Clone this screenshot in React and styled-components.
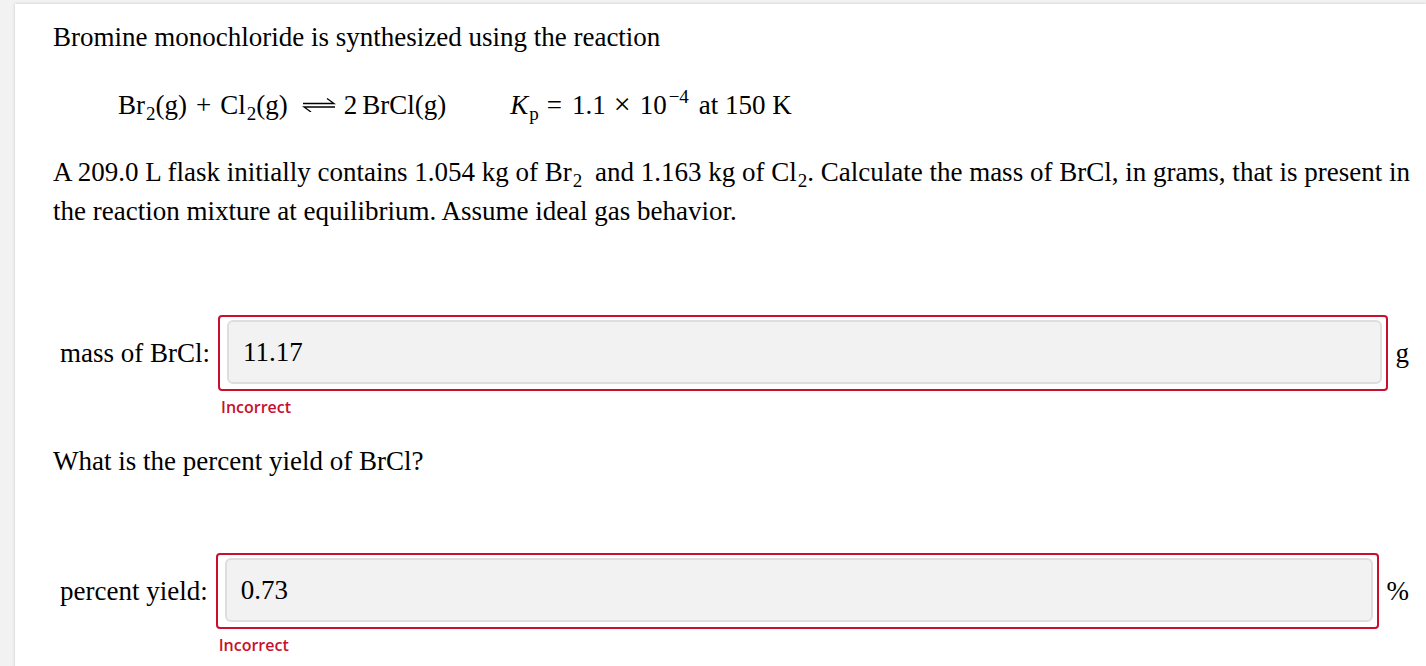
import React from 'react';
import styled, {createGlobalStyle} from 'styled-components';

const GlobalStyle = createGlobalStyle`
  body {
    margin: 0;
    background: #f2f2f2;
    font-family: "Liberation Serif", "Times New Roman", serif;
    color: #000;
  }
`;

const Page = styled.div`
  padding: 4px 0 0 15px;
  height: 662px;
  overflow: hidden;
`;

const Card = styled.div`
  background: #fff;
  box-shadow: 0 0 3px rgba(0, 0, 0, 0.18);
  padding: 14px 8px 40px 38px;
  min-height: 700px;
  font-size: 27px;
  line-height: 39px;
`;

const Para = styled.p`
  margin: ${p => p.$mt || 0}px 0 0 0;
`;

const Equation = styled.div`
  margin: 27px 0 0 65px;
  white-space: nowrap;
`;

const Sub = styled.sub`
  font-size: 19px;
  vertical-align: -6px;
  line-height: 0;
  margin: 0 ${p => p.$mr || 0}px 0 1px;
`;

const Sup = styled.sup`
  font-size: 19px;
  vertical-align: 11px;
  line-height: 0;
  margin-left: 2px;
`;

const Space = styled.span`
  display: inline-block;
  width: ${p => p.$w}px;
`;

const Italic = styled.i``;

const Times = styled.span`
  font-size: 30px;
`;

const ArrowSvg = styled.svg`
  vertical-align: 2px;
  margin: 0 8px 0 14px;
`;

const Arrow = () => (
  <ArrowSvg width="34" height="14" viewBox="0 0 34 14">
    <path d="M1 5.5 H32 L25 0.5" fill="none" stroke="#000" strokeWidth="1.3"/>
    <path d="M33 9 H2 L9 14" fill="none" stroke="#000" strokeWidth="1.3"/>
  </ArrowSvg>
);

const Field = styled.div`
  margin: ${p => p.$mt}px 0 0 7px;
  display: grid;
  grid-template-columns: auto 1fr auto;
  column-gap: 8px;
  align-items: center;
`;

const Label = styled.label`
  white-space: nowrap;
`;

const AnswerBox = styled.div`
  border: 2px solid #c8102e;
  border-radius: 4px;
  padding: 3px 4px 5px 7px;
`;

const Input = styled.div`
  height: 60px;
  background: #f2f2f2;
  border: 2px solid #dedede;
  border-radius: 6px;
  display: flex;
  align-items: center;
  padding-left: 14px;
  font-size: 27px;
`;

const Unit = styled.span`
  padding-right: 9px;
`;

const Feedback = styled.div`
  grid-column: 2;
  margin: 5px 0 0 3px;
  font-family: "Open Sans", "Liberation Sans", sans-serif;
  font-weight: 600;
  font-size: 16px;
  line-height: 22px;
  color: #c8102e;
`;

const Answer = ({mt, label, value, unit}) => (
  <Field $mt={mt}>
    <Label>{label}</Label>
    <AnswerBox>
      <Input>{value}</Input>
    </AnswerBox>
    <Unit>{unit}</Unit>
    <Feedback>Incorrect</Feedback>
  </Field>
);

export default function App() {
  return (
    <>
      <GlobalStyle/>
      <Page>
        <Card>
          <Para>Bromine monochloride is synthesized using the reaction</Para>
          <Equation>
            Br<Sub>2</Sub>(g)
            <Space $w={9}/>+<Space $w={9}/>
            Cl<Sub>2</Sub>(g)
            <Arrow/>
            2<Space $w={5}/>BrCl(g)
            <Space $w={64}/>
            <Italic>K</Italic><Sub $mr={8}>p</Sub>
            =<Space $w={10}/>
            1.1<Space $w={8}/><Times>×</Times><Space $w={9}/>
            10<Sup>−4</Sup><Space $w={10}/>
            at 150 K
          </Equation>
          <Para $mt={28}>
            A 209.0 L flask initially contains 1.054 kg of Br<Sub $mr={6}>2</Sub> and 1.163 kg of Cl<Sub>2</Sub>. Calculate the mass of BrCl, in grams, that is present in the reaction mixture at equilibrium. Assume ideal gas behavior.
          </Para>
          <Answer mt={84} label="mass of BrCl:" value="11.17" unit="g"/>
          <Para $mt={24}>What is the percent yield of BrCl?</Para>
          <Answer mt={72} label="percent yield:" value="0.73" unit="%"/>
        </Card>
      </Page>
    </>
  );
}
